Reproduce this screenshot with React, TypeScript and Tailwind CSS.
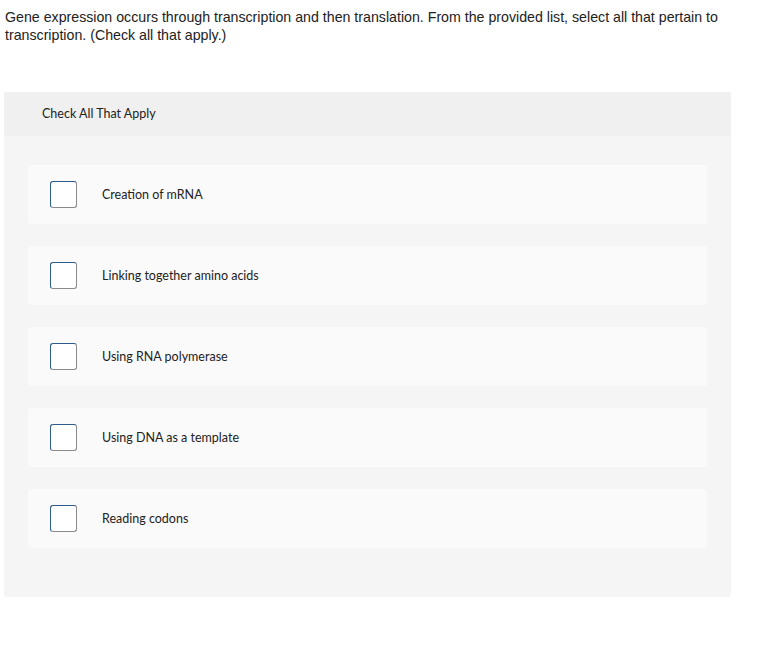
const choices = [
  "Creation of mRNA",
  "Linking together amino acids",
  "Using RNA polymerase",
  "Using DNA as a template",
  "Reading codons",
];

export default function App() {
  return (
    <div className="min-h-screen bg-white font-['Lato','Liberation_Sans',sans-serif] text-[#1a1a1a]">
      <p className="w-[730px] px-[5px] pt-[8px] font-['Liberation_Sans',sans-serif] text-[14.2px] leading-[18px] text-[#222]">
        Gene expression occurs through transcription and then translation. From the provided list, select all that pertain to transcription. (Check all that apply.)
      </p>

      <div className="ml-[4px] mt-[48px] w-[727px] overflow-hidden rounded-[3px] bg-[#f5f5f5]">
        <div className="flex h-[44px] items-center bg-[#f0f0f0] pl-[38px] text-[12.5px] text-[#222]">
          Check All That Apply
        </div>
        <ul className="flex flex-col gap-[22px] px-[24px] pb-[49px] pt-[29px]">
          {choices.map((c) => (
            <li
              key={c}
              className="flex h-[59px] items-center rounded-[3px] bg-[#fafafa] pl-[22px]"
            >
              <span className="h-[27px] w-[27px] rounded-[3px] border border-t-[#2c5c8c] border-l-[#2c5c8c] border-r-[#8a8a8a] border-b-[#8a8a8a] bg-white" />
              <span className="ml-[25px] pt-[1px] text-[12.5px] text-[#222]">{c}</span>
            </li>
          ))}
        </ul>
      </div>
    </div>
  );
}
